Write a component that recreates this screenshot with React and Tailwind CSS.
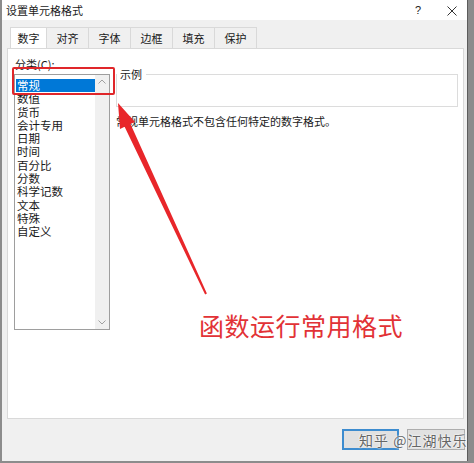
const tabs = ['数字', '对齐', '字体', '边框', '填充', '保护']
const cats = ['常规', '数值', '货币', '会计专用', '日期', '时间', '百分比', '分数', '科学记数', '文本', '特殊', '自定义']

const App = () => {
  return (
    <div className="relative w-[474px] h-[463px] overflow-hidden bg-[#8c8c8c] font-['Noto_Sans_CJK_SC',sans-serif] text-[#1a1a1a]">
      <div className="ml-[2px] w-[466px] h-[461px] flex flex-col bg-[#f0f0f0] border-r border-[#5c5c5c]">
        {/* title bar */}
        <div className="h-[20px] bg-white flex items-center pl-[4px] pr-[10px] text-[11px]">
          <span>设置单元格格式</span>
          <span className="ml-auto mr-[26px] text-[11px] font-['Liberation_Sans',sans-serif]">?</span>
          <svg width="10" height="10" viewBox="0 0 10 10" className="mt-[1px]">
            <path d="M0.5 0.5 L9.5 9.5 M9.5 0.5 L0.5 9.5" stroke="#333" strokeWidth="1" />
          </svg>
        </div>

        {/* tabs */}
        <div className="flex pl-[8px] pt-[7px] text-[11px]">
          {tabs.map((t, i) => (
            <div
              key={t}
              className={
                i === 0
                  ? 'w-[37px] h-[21px] flex items-center justify-center bg-white border border-b-0 border-[#d9d9d9] relative z-10 -mb-px'
                  : 'w-[42px] h-[21px] flex items-center justify-center border-t border-r border-[#d9d9d9]'
              }
            >
              {t}
            </div>
          ))}
        </div>

        {/* panel */}
        <div className="ml-[5px] mr-[3px] h-[371px] bg-white border border-[#d9d9d9] flex pl-[6px] pt-[8px]">
          <div className="w-[96px] flex flex-col">
            <div className="text-[11px] h-[17px] leading-[14px] pl-[1px]">分类(C):</div>
            <div className="h-[256px] border border-[#9e9e9e] flex">
              <div className="flex-1 pt-[4px] pl-[1px] text-[11.5px]">
                {cats.map((c, i) => (
                  <div
                    key={c}
                    className={
                      i === 0
                        ? 'h-[13.3px] leading-[13.3px] bg-[#0078d7] text-white pl-[1px]'
                        : 'h-[13.3px] leading-[13.3px] pl-[1px]'
                    }
                  >
                    {c}
                  </div>
                ))}
              </div>
              <div className="w-[14px] bg-[#f0f0f0] flex flex-col items-center justify-between py-[4px]">
                <svg width="8" height="5" viewBox="0 0 8 5">
                  <path d="M0.5 4.5 L4 1 L7.5 4.5" stroke="#a0a0a0" fill="none" />
                </svg>
                <svg width="8" height="5" viewBox="0 0 8 5">
                  <path d="M0.5 0.5 L4 4 L7.5 0.5" stroke="#a0a0a0" fill="none" />
                </svg>
              </div>
            </div>
          </div>

          <div className="flex-1 pl-[7px] pt-[17px] pr-[5px]">
            <div className="relative h-[33px] border-l border-r border-b border-[#dcdcdc] ml-[-1px]">
              <div className="absolute -top-[7px] left-[3px] right-0 flex items-center">
                <span className="text-[11px] bg-white pr-[4px] leading-[14px]">示例</span>
                <div className="flex-1 h-px bg-[#dcdcdc]" />
              </div>
            </div>
            <div className="mt-[7px] text-[11px] leading-[14px] -ml-[1px]">常规单元格格式不包含任何特定的数字格式。</div>
          </div>
        </div>

        {/* bottom buttons */}
        <div className="flex-1 flex justify-end items-start pt-[10px] pr-[2px] gap-[8px]">
          <div className="w-[57px] h-[21px] bg-[#e1e1e1] border-2 border-[#3d8ccf]" />
          <div className="w-[58px] h-[21px] bg-[#e1e1e1] border border-[#adadad]" />
        </div>
      </div>

      {/* annotation overlays */}
      <div className="absolute left-[12px] top-[67px] w-[103px] h-[28px] border-2 border-[#e0262a] rounded-[2px]" />
      <svg className="absolute left-0 top-0" width="474" height="463" viewBox="0 0 474 463">
        <polygon
          points="118,103 135,122 130.5,124 206.9,293.6 205.1,294.4 124.6,126.7 120,129"
          fill="#e8262a"
        />
      </svg>
      <div className="absolute left-[199px] top-[310px] text-[25px] leading-[30px] text-[#e23236] tracking-[0.5px]">函数运行常用格式</div>
      <div className="absolute left-[359px] top-[432px] text-[14px] leading-[16px] text-[#666] tracking-[1px] [text-shadow:0_0_2px_#fff,0_0_2px_#fff]">知乎 @江湖快乐</div>
    </div>
  )
}

export default App
